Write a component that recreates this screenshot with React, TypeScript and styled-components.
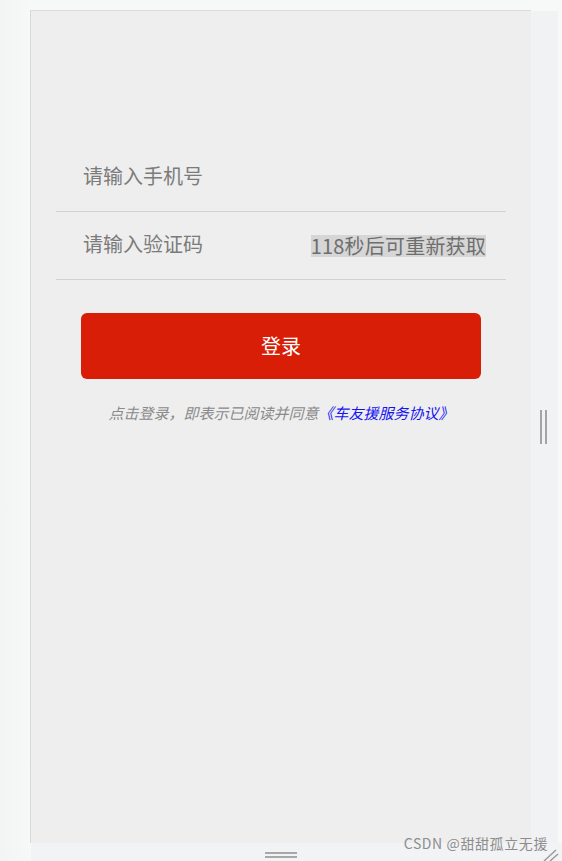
import React from 'react';
import styled, { createGlobalStyle } from 'styled-components';

const GlobalStyle = createGlobalStyle`
  html, body {
    margin: 0;
    padding: 0;
    background: #f6f8f8;
    font-family: "Noto Sans CJK SC", "Noto Sans", sans-serif;
  }
`;

const Page = styled.div`
  position: relative;
  width: 562px;
  height: 861px;
  overflow: hidden;
  background: linear-gradient(to right, #f2f5f4 0px, #f7f8f8 30px, #f7f8f8 100%);
`;

const Frame = styled.div`
  display: grid;
  grid-template-columns: 501px 27px;
  grid-template-rows: 833px 18px;
  padding: 10px 0 0 30px;
`;

const Panel = styled.div`
  box-sizing: border-box;
  background: #eeeeee;
  border-top: 1px solid #dcdcdc;
  border-left: 1px solid #d8d8d8;
  padding-top: 133px;
  display: flex;
  flex-direction: column;
`;

const BottomStrip = styled.div`
  grid-column: 1 / 3;
  margin-left: 1px;
  margin-right: -4px;
  background: #f2f3f5;
  display: flex;
  justify-content: center;
  padding-right: 32px;
`;

const SideStrip = styled.div`
  margin-top: 1px;
  background: #f1f2f4;
  display: flex;
  align-items: center;
  justify-content: center;
`;

const Field = styled.div`
  margin: 0 25px 0 25px;
  height: 68px;
  border-bottom: 1px solid #d2d2d2;
  display: flex;
  align-items: center;
  justify-content: space-between;
  padding: 0 20px 4px 27px;
  box-sizing: border-box;
`;

const Placeholder = styled.span`
  font-size: 20px;
  color: #7b7b7b;
`;

const CountDown = styled.span`
  font-size: 20px;
  line-height: 22px;
  color: #6e6e6e;
  background: #d6d6d6;
  margin-top: 4px;
  letter-spacing: 0.2px;
`;

const LoginButton = styled.button`
  margin: 33px 50px 0 50px;
  height: 66px;
  border: none;
  border-radius: 6px;
  background: #d81e06;
  color: #ffffff;
  font-family: inherit;
  font-size: 20px;
  padding-bottom: 2px;
`;

const Agreement = styled.p`
  margin: 23px 0 0 0;
  text-align: center;
  font-size: 15px;
  font-style: italic;
  color: #8a8a8a;
`;

const Link = styled.span`
  color: #1414f0;
`;

const VHandle = styled.div`
  width: 7px;
  height: 34px;
  margin-right: 2px;
  border-left: 2px solid #a4a4a4;
  border-right: 2px solid #a4a4a4;
  box-sizing: border-box;
`;

const HHandle = styled.div`
  margin-top: 9px;
  width: 32px;
  height: 6px;
  border-top: 2px solid #a8a8a8;
  border-bottom: 2px solid #a8a8a8;
  box-sizing: border-box;
`;

const Watermark = styled.span`
  position: absolute;
  right: 14px;
  bottom: 8px;
  font-size: 14px;
  color: #8d8d8d;
  letter-spacing: 0.6px;
`;

const Grip = styled.svg`
  position: absolute;
  right: 2px;
  bottom: 0;
`;

export default function App() {
  return (
    <Page>
      <GlobalStyle />
      <Frame>
        <Panel>
          <Field>
            <Placeholder>请输入手机号</Placeholder>
          </Field>
          <Field>
            <Placeholder>请输入验证码</Placeholder>
            <CountDown>118秒后可重新获取</CountDown>
          </Field>
          <LoginButton>登录</LoginButton>
          <Agreement>
            点击登录，即表示已阅读并同意<Link>《车友援服务协议》</Link>
          </Agreement>
        </Panel>
        <SideStrip>
          <VHandle />
        </SideStrip>
        <BottomStrip>
          <HHandle />
        </BottomStrip>
      </Frame>
      <Watermark>CSDN @甜甜孤立无援</Watermark>
      <Grip width="20" height="14" viewBox="0 0 20 14">
        <line x1="4" y1="14" x2="16" y2="3" stroke="#9a9a9a" strokeWidth="1.5" />
        <line x1="10" y1="14" x2="18" y2="7" stroke="#9a9a9a" strokeWidth="1.5" />
      </Grip>
    </Page>
  );
}
